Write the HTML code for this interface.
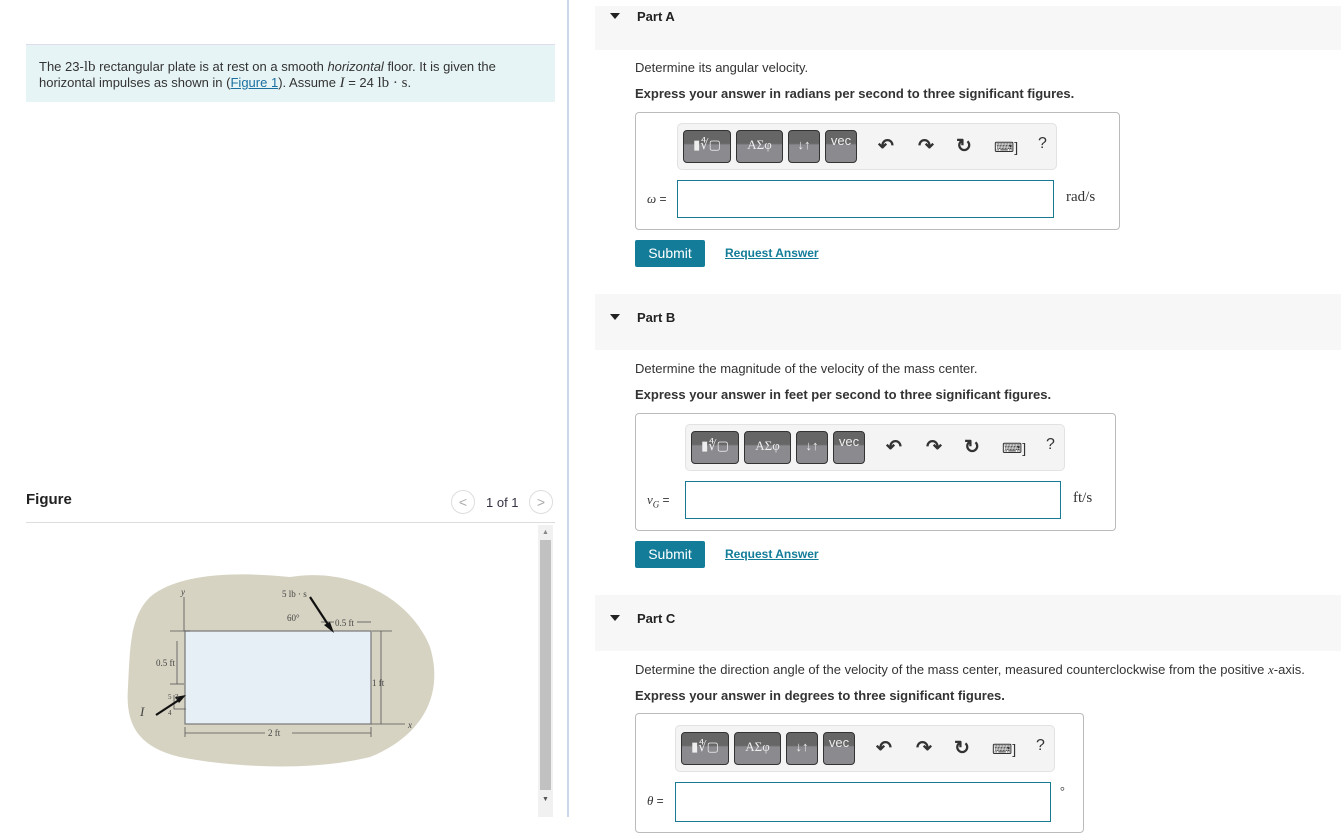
<!DOCTYPE html>
<html><head><meta charset="utf-8"><style>
*{margin:0;padding:0;box-sizing:border-box}
body{width:1341px;height:817px;overflow:hidden;background:#fff;font-family:"Liberation Sans",Arial,sans-serif;color:#222;position:relative}
.a{position:absolute}
.info{left:26px;top:44px;width:529px;height:58px;background:#e7f4f5;border-top:1px solid #dde;font-size:13px;line-height:15px;padding:14px 13px;color:#333}
.ser{font-family:"Liberation Serif",serif;font-size:15px}
.div{left:567px;top:0;width:2px;height:817px;background:#c9d8e8}
.band{left:595px;width:746px;height:44px;background:#f7f7f7}
.tri{width:0;height:0;border-left:5px solid transparent;border-right:5px solid transparent;border-top:6px solid #222}
.ph{font-size:13px;font-weight:bold;color:#222}
.t{font-size:13px;color:#333}
.tb{font-size:13px;font-weight:bold;color:#333}
.box{border:1px solid #bbb;border-radius:4px;background:#fff}
.tool{width:380px;height:47px;background:#f4f4f4;border:1px solid #e2e2e2;border-radius:5px}
.btn{top:6px;height:33px;border:1px solid #333;border-radius:4px;background:linear-gradient(#666 0,#666 40%,#8a8a8f 45%,#8a8a8f 100%);color:#eee;font-size:13px;text-align:center;line-height:28px}
.ic{top:11px;font-size:19px;color:#333;font-weight:bold}
.inp{border:1px solid #1a7a94;background:#fff}
.sub{width:70px;height:27px;background:#137c99;color:#fff;font-size:14px;text-align:center;line-height:27px;border-radius:2px}
.req{font-size:12px;font-weight:bold;color:#137c99;text-decoration:underline}
.unit{font-family:"Liberation Serif",serif;font-size:15px;color:#333}
.lbl{font-family:"Liberation Serif",serif;font-style:italic;font-size:13px;color:#333}
</style></head><body>

<div class="a info">The 23-<span class="ser">lb</span> rectangular plate is at rest on a smooth <i>horizontal</i> floor. It is given the<br>horizontal impulses as shown in (<span style="color:#1a6fa0;text-decoration:underline">Figure 1</span>). Assume <span class="ser"><i>I</i></span> = 24 <span class="ser">lb · s</span>.</div>

<div class="a" style="left:26px;top:491px;font-size:15px;font-weight:bold">Figure</div>
<div class="a" style="left:451px;top:490px;width:24px;height:24px;border:1px solid #ddd;border-radius:50%;color:#aaa;text-align:center;line-height:22px;font-size:14px">&lt;</div>
<div class="a" style="left:486px;top:495px;font-size:13px;color:#334">1 of 1</div>
<div class="a" style="left:529px;top:490px;width:24px;height:24px;border:1px solid #ddd;border-radius:50%;color:#aaa;text-align:center;line-height:22px;font-size:14px">&gt;</div>
<div class="a" style="left:26px;top:522px;width:529px;height:1px;background:#ddd"></div>
<div class="a" style="left:538px;top:525px;width:15px;height:292px;background:#f1f1f1"></div>
<div class="a" style="left:540px;top:540px;width:11px;height:250px;background:#c1c1c1"></div>
<div class="a" style="left:542px;top:529px;font-size:7px;color:#888">▲</div>
<div class="a" style="left:542px;top:796px;font-size:7px;color:#555">▼</div>

<svg class="a" style="left:120px;top:537px" width="320" height="260" viewBox="0 0 320 260">
<path d="M30 60 C60 35 120 35 170 40 C230 30 290 60 310 110 C325 160 300 200 250 220 C190 235 110 230 60 220 C20 210 5 190 8 150 C10 110 10 80 30 60Z" fill="#d6d3c2"/>
<rect x="65" y="94" width="186" height="93" fill="#e6eef6" stroke="#777" stroke-width="1.2"/>
<g stroke="#555" stroke-width="0.8" fill="none">
<line x1="64" y1="60" x2="64" y2="94"/><line x1="251" y1="187" x2="285" y2="187"/>
<line x1="57" y1="104" x2="57" y2="147"/><line x1="50" y1="94" x2="70" y2="94"/><line x1="50" y1="147" x2="64" y2="147"/>
<line x1="261" y1="94" x2="261" y2="187"/><line x1="252" y1="94" x2="272" y2="94"/>
<line x1="65" y1="196" x2="145" y2="196"/><line x1="172" y1="196" x2="251" y2="196"/>
<line x1="65" y1="190" x2="65" y2="200"/><line x1="251" y1="190" x2="251" y2="200"/>
<line x1="201" y1="85" x2="214" y2="85"/><line x1="237" y1="85" x2="251" y2="85"/>
<path d="M54 158 L54 172 L66 172"/>
</g>
<line x1="190" y1="60" x2="211" y2="92" stroke="#111" stroke-width="2.2"/>
<path d="M214 96 L204 88 L210 85Z" fill="#111"/>
<line x1="36" y1="178" x2="62" y2="161" stroke="#111" stroke-width="2.2"/>
<path d="M66 158 L55 160 L59 166Z" fill="#111"/>
<g font-family="Liberation Serif,serif" font-size="9" fill="#444">
<text x="162" y="60">5 lb · s</text><text x="167" y="84">60°</text><text x="215" y="89">0.5 ft</text>
<text x="36" y="129">0.5 ft</text><text x="252" y="149">1 ft</text><text x="148" y="199">2 ft</text>
<text x="61" y="58" font-style="italic">y</text><text x="288" y="191" font-style="italic">x</text>
<text x="20" y="179" font-style="italic" font-size="13">I</text>
<text x="48" y="162" font-size="7">5</text><text x="55" y="162" font-size="7">3</text><text x="48" y="178" font-size="7">4</text>
</g>
</svg>

<div class="a div"></div>

<!-- Part A -->
<div class="a band" style="top:6px"></div>
<div class="a tri" style="left:610px;top:13px"></div>
<div class="a ph" style="left:637px;top:9px">Part A</div>
<div class="a t" style="left:635px;top:60px">Determine its angular velocity.</div>
<div class="a tb" style="left:635px;top:86px">Express your answer in radians per second to three significant figures.</div>
<div class="a box" style="left:635px;top:112px;width:485px;height:118px"></div>
<div class="a tool" style="left:677px;top:123px">
 <div class="a btn" style="left:5px;width:48px">▮∜▢</div>
 <div class="a btn" style="left:58px;width:47px;font-family:'Liberation Serif',serif">ΑΣφ</div>
 <div class="a btn" style="left:110px;width:32px">↓↑</div>
 <div class="a btn" style="left:147px;width:32px;line-height:20px">vec</div>
 <div class="a ic" style="left:200px">↶</div><div class="a ic" style="left:240px">↷</div><div class="a ic" style="left:278px">↻</div>
 <div class="a ic" style="left:316px;font-size:14px;top:15px;font-weight:normal">⌨]</div><div class="a ic" style="left:360px;font-size:16px;font-weight:normal">?</div>
</div>
<div class="a lbl" style="left:647px;top:191px">ω <span style="font-style:normal;font-family:'Liberation Sans';font-size:12px">=</span></div>
<div class="a inp" style="left:677px;top:180px;width:377px;height:38px"></div>
<div class="a unit" style="left:1066px;top:189px">rad/s</div>
<div class="a sub" style="left:635px;top:240px">Submit</div>
<div class="a req" style="left:725px;top:246px">Request Answer</div>

<!-- Part B -->
<div class="a band" style="top:294px;height:56px"></div>
<div class="a tri" style="left:610px;top:314px"></div>
<div class="a ph" style="left:637px;top:310px">Part B</div>
<div class="a t" style="left:635px;top:361px">Determine the magnitude of the velocity of the mass center.</div>
<div class="a tb" style="left:635px;top:387px">Express your answer in feet per second to three significant figures.</div>
<div class="a box" style="left:635px;top:413px;width:481px;height:118px"></div>
<div class="a tool" style="left:685px;top:424px">
 <div class="a btn" style="left:5px;width:48px">▮∜▢</div>
 <div class="a btn" style="left:58px;width:47px;font-family:'Liberation Serif',serif">ΑΣφ</div>
 <div class="a btn" style="left:110px;width:32px">↓↑</div>
 <div class="a btn" style="left:147px;width:32px;line-height:20px">vec</div>
 <div class="a ic" style="left:200px">↶</div><div class="a ic" style="left:240px">↷</div><div class="a ic" style="left:278px">↻</div>
 <div class="a ic" style="left:316px;font-size:14px;top:15px;font-weight:normal">⌨]</div><div class="a ic" style="left:360px;font-size:16px;font-weight:normal">?</div>
</div>
<div class="a lbl" style="left:647px;top:492px">v<sub style="font-size:9px">G</sub> <span style="font-style:normal;font-family:'Liberation Sans';font-size:12px">=</span></div>
<div class="a inp" style="left:685px;top:481px;width:376px;height:38px"></div>
<div class="a unit" style="left:1073px;top:490px">ft/s</div>
<div class="a sub" style="left:635px;top:541px">Submit</div>
<div class="a req" style="left:725px;top:547px">Request Answer</div>

<!-- Part C -->
<div class="a band" style="top:595px;height:56px"></div>
<div class="a tri" style="left:610px;top:615px"></div>
<div class="a ph" style="left:637px;top:611px">Part C</div>
<div class="a t" style="left:635px;top:662px">Determine the direction angle of the velocity of the mass center, measured counterclockwise from the positive <i class="ser" style="font-size:13px">x</i>-axis.</div>
<div class="a tb" style="left:635px;top:688px">Express your answer in degrees to three significant figures.</div>
<div class="a box" style="left:635px;top:713px;width:449px;height:120px"></div>
<div class="a tool" style="left:675px;top:725px">
 <div class="a btn" style="left:5px;width:48px">▮∜▢</div>
 <div class="a btn" style="left:58px;width:47px;font-family:'Liberation Serif',serif">ΑΣφ</div>
 <div class="a btn" style="left:110px;width:32px">↓↑</div>
 <div class="a btn" style="left:147px;width:32px;line-height:20px">vec</div>
 <div class="a ic" style="left:200px">↶</div><div class="a ic" style="left:240px">↷</div><div class="a ic" style="left:278px">↻</div>
 <div class="a ic" style="left:316px;font-size:14px;top:15px;font-weight:normal">⌨]</div><div class="a ic" style="left:360px;font-size:16px;font-weight:normal">?</div>
</div>
<div class="a lbl" style="left:647px;top:793px">θ <span style="font-style:normal;font-family:'Liberation Sans';font-size:12px">=</span></div>
<div class="a inp" style="left:675px;top:782px;width:376px;height:40px"></div>
<div class="a unit" style="left:1060px;top:784px;font-size:12px">°</div>
</body></html>
